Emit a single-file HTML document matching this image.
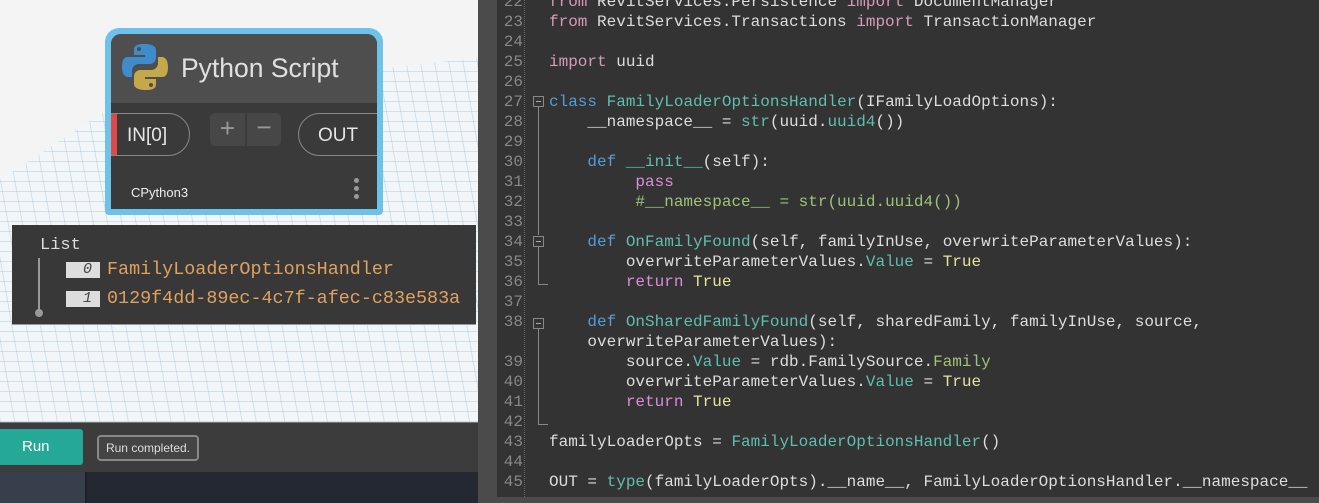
<!DOCTYPE html>
<html><head><meta charset="utf-8"><style>
*{margin:0;padding:0;box-sizing:border-box}
body{width:1319px;height:503px;overflow:hidden;background:#f4f4f4;position:relative;font-family:"Liberation Sans",sans-serif}
.abs{position:absolute}
.grid{left:0;top:0;width:478px;height:422px;clip-path:polygon(0 180px,130px 95px,478px 58px,478px 422px,0 422px);
background-color:#f3f6f8;
background-image:repeating-linear-gradient(0deg,rgba(160,190,212,.4) 0 1px,transparent 1px 10px),repeating-linear-gradient(80deg,rgba(160,190,212,.4) 0 1px,transparent 1px 14px);}
.code{left:478px;top:0;width:841px;height:503px;background:#333}
.strip{left:478px;top:0;width:19px;height:503px;background:#4b4b4b}
.bstrip{left:478px;top:497px;width:841px;height:6px;background:#4b4b4b}
.ln{left:497px;width:26px;text-align:right;color:#888;font:16px/20px "Liberation Mono",monospace}
.sep{left:524px;top:0;width:1px;height:497px;border-left:1px dotted #666}
pre{position:absolute;left:549px;top:-8px;font:16px/20px "Liberation Mono",monospace;color:#ddd;white-space:pre}
.k{color:#d79bb8}.b{color:#569cd6}.t{color:#5fbfae}.y{color:#e4e49c}.g{color:#9fc27a}.m{color:#d88ed8}
.fold{width:11px;height:11px;border:1px solid #888;left:533px}
.fold:after{content:"";position:absolute;left:2px;top:4px;width:5px;height:1px;background:#aaa}
</style></head><body>
<div class="abs grid"></div>
<!-- node -->
<div class="abs" style="left:105px;top:28px;width:278px;height:187px;background:#6cc2e8;border-radius:14px 14px 4px 4px"></div>
<div class="abs" style="left:111px;top:34px;width:266px;height:175px;background:#3a3a3a;border-radius:10px 10px 0 0;overflow:hidden">
 <div class="abs" style="left:0;top:0;width:266px;height:69px;background:#4e4e4e"></div>
 <svg class="abs" style="left:10px;top:8px" width="48" height="50" viewBox="0 0 48 50">
  <path d="M23 2c-9 0-10 3-10 6v5h11v2H7c-4 0-6 3-6 10s3 10 6 10h4v-6c0-4 3-7 7-7h11c3 0 6-3 6-6V8c0-3-3-6-12-6z" fill="#3f8ccc"/>
  <circle cx="18" cy="7" r="2" fill="#4e4e4e"/>
  <path d="M25 48c9 0 10-3 10-6v-5H24v-2h17c4 0 6-3 6-10s-3-10-6-10h-4v6c0 4-3 7-7 7H19c-3 0-6 3-6 6v8c0 3 3 6 12 6z" fill="#c4a84a"/>
  <circle cx="30" cy="43" r="2" fill="#4e4e4e"/>
 </svg>
 <div class="abs" style="left:70px;top:19px;font-size:26.5px;color:#e0e0e0">Python Script</div>
 <div class="abs" style="left:-20px;top:79px;width:99px;height:43px;border:1.5px solid #888;border-radius:22px"></div>
 <div class="abs" style="left:0;top:80px;width:6px;height:41px;background:#e04848"></div>
 <div class="abs" style="left:16px;top:91px;font-size:19px;color:#e6e6e6">IN[0]</div>
 <div class="abs" style="left:99px;top:79px;width:35px;height:33px;background:#474747;border-radius:5px 0 0 5px;color:#999;font-size:26px;text-align:center;line-height:30px">+</div>
 <div class="abs" style="left:136px;top:79px;width:34px;height:33px;background:#474747;border-radius:0 5px 5px 0;color:#999;font-size:26px;text-align:center;line-height:28px">−</div>
 <div class="abs" style="left:187px;top:79px;width:110px;height:43px;border:1.5px solid #888;border-radius:22px"></div>
 <div class="abs" style="left:207px;top:91px;font-size:19px;color:#e6e6e6">OUT</div>
 <div class="abs" style="left:20px;top:151px;font-size:13px;color:#eee">CPython3</div>
 <div class="abs" style="left:243px;top:144px;width:5px;height:5px;border-radius:50%;background:#999;box-shadow:0 8px #999,0 16px #999"></div>
</div>
<!-- preview -->
<div class="abs" style="left:12px;top:225px;width:464px;height:100px;background:#383838;border-bottom:1px solid #999;overflow:hidden;font-family:'Liberation Mono',monospace">
 <div class="abs" style="left:28px;top:11px;color:#ddd;font-size:17px">List</div>
 <div class="abs" style="left:26px;top:33px;width:2px;height:54px;background:#999"></div>
 <div class="abs" style="left:23px;top:84px;width:8px;height:8px;border-radius:50%;background:#999"></div>
 <div class="abs" style="left:54px;top:37px;width:34px;height:16px;background:#ddd;color:#444;font-size:15px;font-style:italic;text-align:right;padding-right:8px;line-height:16px">0</div>
 <div class="abs" style="left:54px;top:66px;width:34px;height:16px;background:#ddd;color:#444;font-size:15px;font-style:italic;text-align:right;padding-right:8px;line-height:16px">1</div>
 <div class="abs" style="left:95px;top:34px;color:#e0a060;font-size:18.4px;white-space:nowrap">FamilyLoaderOptionsHandler</div>
 <div class="abs" style="left:95px;top:63px;color:#e0a060;font-size:18.4px;white-space:nowrap;width:361px;overflow:hidden">0129f4dd-89ec-4c7f-afec-c83e583a</div>
</div>
<!-- bottom bar -->
<div class="abs" style="left:0;top:422px;width:478px;height:50px;background:#3c3c3c;border-top:1px solid #777"></div>
<div class="abs" style="left:0;top:429px;width:83px;height:36px;background:#26a896;border-radius:0 3px 3px 0;color:#fff;font-size:15px;line-height:36px;padding-left:22px">Run</div>
<div class="abs" style="left:97px;top:435px;width:102px;height:26px;border:2px solid #888;border-radius:4px;background:#444;color:#ddd;font-size:12px;line-height:22px;text-align:center">Run completed.</div>
<div class="abs" style="left:0;top:472px;width:478px;height:31px;background:#242833"></div>
<div class="abs" style="left:0;top:472px;width:87px;height:31px;background:#373e4c;border-right:2px solid #1c1f27"></div>
<!-- code -->
<div class="abs code"></div>
<div class="abs strip"></div>
<div class="abs bstrip"></div>
<div class="abs sep"></div>
<pre class="ln" style="position:absolute;top:-8px;font:16px/20px 'Liberation Mono',monospace">22
23
24
25
26
27
28
29
30
31
32
33
34
35
36
37
38

39
40
41
42
43
44
45</pre>
<div class="abs fold" style="top:96px"></div>
<div class="abs" style="left:538px;top:107px;width:1px;height:128px;background:#888"></div>
<div class="abs fold" style="top:236px"></div>
<div class="abs" style="left:538px;top:247px;width:1px;height:38px;background:#888"></div>
<div class="abs" style="left:538px;top:284px;width:10px;height:1px;background:#888"></div>
<div class="abs fold" style="top:318px"></div>
<div class="abs" style="left:538px;top:329px;width:1px;height:96px;background:#888"></div>
<div class="abs" style="left:538px;top:424px;width:10px;height:1px;background:#888"></div>
<pre><span class="k">from</span> RevitServices.Persistence <span class="k">import</span> DocumentManager
<span class="k">from</span> RevitServices.Transactions <span class="k">import</span> TransactionManager

<span class="k">import</span> uuid

<span class="b">class</span> <span class="t">FamilyLoaderOptionsHandler</span>(IFamilyLoadOptions):
    __namespace__ = <span class="t">str</span>(uuid.<span class="t">uuid4</span>())

    <span class="b">def</span> <span class="t">__init__</span>(self):
         <span class="m">pass</span>
         <span class="g">#__namespace__ = str(uuid.uuid4())</span>

    <span class="b">def</span> <span class="t">OnFamilyFound</span>(self, familyInUse, overwriteParameterValues):
        overwriteParameterValues.<span class="t">Value</span> = <span class="y">True</span>
        <span class="m">return</span> <span class="y">True</span>

    <span class="b">def</span> <span class="t">OnSharedFamilyFound</span>(self, sharedFamily, familyInUse, source,
    overwriteParameterValues):
        source.<span class="t">Value</span> = rdb.FamilySource.<span class="g">Family</span>
        overwriteParameterValues.<span class="t">Value</span> = <span class="y">True</span>
        <span class="m">return</span> <span class="y">True</span>

familyLoaderOpts = <span class="t">FamilyLoaderOptionsHandler</span>()

OUT = <span class="t">type</span>(familyLoaderOpts).__name__, FamilyLoaderOptionsHandler.__namespace__</pre>
</body></html>
